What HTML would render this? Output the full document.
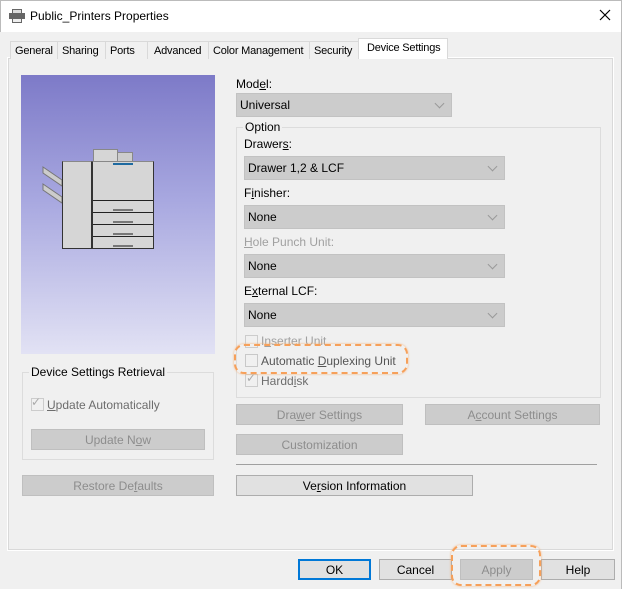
<!DOCTYPE html>
<html><head><meta charset="utf-8"><style>
*{box-sizing:border-box;margin:0;padding:0}
body{width:622px;height:589px;overflow:hidden;background:#f0f0f0;font-family:"Liberation Sans",sans-serif;font-size:12px;color:#000;position:relative}
.a{position:absolute}
.title{left:0;top:0;width:622px;height:32px;background:#fff;border:1px solid #bbb;border-bottom:none}
.tab{position:absolute;top:41px;height:18px;border:1px solid #d9d9d9;border-bottom:none;background:#f0f0f0;padding:3px 0 0 4px;white-space:nowrap;font-size:11px;letter-spacing:-0.2px;overflow:hidden}
.dd{position:absolute;background:#cccccc;border:1px solid #c2c2c2;padding:4px 0 0 3px;}
.dd:after{content:"";position:absolute;right:8px;top:6px;width:6px;height:6px;border-right:1px solid #999;border-bottom:1px solid #999;transform:rotate(45deg)}
.btn{position:absolute;background:#cccccc;border:1px solid #bfbfbf;color:#8d8d8d;text-align:center;padding-top:3px}
.en{background:#e1e1e1;border-color:#adadad;color:#000}
.lbl{position:absolute;white-space:nowrap}
.dis{color:#a0a0a0}
.cb{position:absolute;width:13px;height:13px;border:1px solid #cccccc;background:#f0f0f0}
.grp{position:absolute;border:1px solid #dcdcdc}
.grp span{position:absolute;left:6px;top:-8px;background:#f0f0f0;padding:0 2px}
.hl{position:absolute;border:2.5px dashed #f6a05a;border-radius:10px;box-shadow:0 0 2px #f8b37a}
</style></head><body>
<div class="a title"></div>
<div class="a" style="left:9px;top:9px;width:16px;height:13px">
<div class="a" style="left:3px;top:0;width:10px;height:5px;border:1px solid #666;background:#ddd"></div>
<div class="a" style="left:0;top:4px;width:16px;height:6px;background:#666"></div>
<div class="a" style="left:3px;top:9px;width:10px;height:5px;background:#eee;border:1px solid #666"></div></div>
<div class="lbl" style="left:30px;top:9px;font-size:12px">Public_Printers Properties</div>
<svg class="a" style="left:599px;top:9px" width="12" height="12"><path d="M1 1L11 11M11 1L1 11" stroke="#000" stroke-width="1.2"/></svg>

<div class="a" style="left:8px;top:58px;width:605px;height:492px;border:1px solid #d9d9d9;background:#f0f0f0;outline:1px solid #fff"></div>
<div class="tab" style="left:10px;width:48px">General</div>
<div class="tab" style="left:57px;width:49px">Sharing</div>
<div class="tab" style="left:105px;width:43px">Ports</div>
<div class="tab" style="left:147px;width:62px;padding-left:6px">Advanced</div>
<div class="tab" style="left:208px;width:102px">Color Management</div>
<div class="tab" style="left:309px;width:50px">Security</div>
<div class="tab" style="left:358px;top:38px;height:21px;width:90px;background:#fff;padding:3px 0 0 8px">Device Settings</div>

<div class="a" style="left:21px;top:75px;width:194px;height:279px;background:linear-gradient(#7d7ac8,#a8a8e0 45%,#e2e2f4 100%)"></div>
<!-- copier -->
<svg class="a" style="left:40px;top:160px" width="26" height="60"><path d="M3 7L22 20L22 26L3 13Z" fill="#ccc" stroke="#777"/><path d="M3 24L22 37L22 43L3 30Z" fill="#ccc" stroke="#777"/></svg>
<div class="a" style="left:62px;top:161px;width:30px;height:88px;background:#d6d6d6;border:1px solid #333;border-top-color:#888"></div>
<div class="a" style="left:93px;top:149px;width:25px;height:14px;background:#d6d6d6;border:1px solid #888"></div>
<div class="a" style="left:117px;top:152px;width:16px;height:10px;background:#ccc;border:1px solid #888"></div>
<div class="a" style="left:92px;top:161px;width:62px;height:88px;background:#d6d6d6;border:1px solid #333;border-top-color:#888"></div>
<div class="a" style="left:113px;top:163px;width:20px;height:2px;background:#1e6aa0"></div>
<div class="a" style="left:93px;top:200px;width:60px;height:1px;background:#222"></div>
<div class="a" style="left:93px;top:212px;width:60px;height:1px;background:#222"></div>
<div class="a" style="left:93px;top:224px;width:60px;height:1px;background:#222"></div>
<div class="a" style="left:93px;top:236px;width:60px;height:1px;background:#222"></div>
<div class="a" style="left:113px;top:209px;width:20px;height:2px;background:#777"></div>
<div class="a" style="left:113px;top:221px;width:20px;height:2px;background:#777"></div>
<div class="a" style="left:113px;top:233px;width:20px;height:2px;background:#777"></div>
<div class="a" style="left:113px;top:245px;width:20px;height:2px;background:#777"></div>

<div class="grp" style="left:22px;top:372px;width:192px;height:88px"><span>Device Settings Retrieval</span></div>
<div class="cb" style="left:31px;top:398px"></div>
<div class="lbl dis" style="left:31px;top:395px;color:#aaa">✓</div>
<div class="lbl dis" style="left:47px;top:398px;color:#6d6d6d"><u>U</u>pdate Automatically</div>
<div class="btn" style="left:31px;top:429px;width:174px;height:21px">Update N<u>o</u>w</div>
<div class="btn" style="left:22px;top:475px;width:192px;height:21px">Restore De<u>f</u>aults</div>

<div class="lbl" style="left:236px;top:77px">Mod<u>e</u>l:</div>
<div class="dd" style="left:236px;top:93px;width:216px;height:24px">Universal</div>
<div class="grp" style="left:236px;top:127px;width:365px;height:271px"><span>Option</span></div>
<div class="lbl" style="left:244px;top:137px">Drawer<u>s</u>:</div>
<div class="dd" style="left:244px;top:156px;width:261px;height:24px">Drawer 1,2 &amp; LCF</div>
<div class="lbl" style="left:244px;top:186px">F<u>i</u>nisher:</div>
<div class="dd" style="left:244px;top:205px;width:261px;height:24px">None</div>
<div class="lbl dis" style="left:244px;top:235px"><u>H</u>ole Punch Unit:</div>
<div class="dd" style="left:244px;top:254px;width:261px;height:24px">None</div>
<div class="lbl" style="left:244px;top:284px">E<u>x</u>ternal LCF:</div>
<div class="dd" style="left:244px;top:303px;width:261px;height:24px">None</div>
<div class="cb" style="left:245px;top:335px"></div>
<div class="lbl dis" style="left:261px;top:334px">I<u>n</u>serter Unit</div>
<div class="cb" style="left:245px;top:354px;border-color:#c8c8c8"></div>
<div class="lbl" style="left:261px;top:354px;color:#555">Automatic <u>D</u>uplexing Unit</div>
<div class="cb" style="left:245px;top:374px"></div>
<div class="lbl" style="left:246px;top:371px;color:#aaa">✓</div>
<div class="lbl" style="left:261px;top:374px;color:#6d6d6d">Hardd<u>i</u>sk</div>
<div class="hl" style="left:234px;top:344px;width:174px;height:30px"></div>

<div class="btn" style="left:236px;top:404px;width:167px;height:21px">Dra<u>w</u>er Settings</div>
<div class="btn" style="left:425px;top:404px;width:175px;height:21px">A<u>c</u>count Settings</div>
<div class="btn" style="left:236px;top:434px;width:167px;height:21px">Customization</div>
<div class="a" style="left:236px;top:464px;width:361px;height:1px;background:#a0a0a0"></div>
<div class="btn en" style="left:236px;top:475px;width:237px;height:21px">Ve<u>r</u>sion Information</div>

<div class="btn en" style="left:298px;top:559px;width:73px;height:21px;border:2px solid #0078d7;padding-top:2px">OK</div>
<div class="btn en" style="left:379px;top:559px;width:73px;height:21px">Cancel</div>
<div class="btn" style="left:460px;top:559px;width:73px;height:21px;color:#8d8d8d">Apply</div>
<div class="btn en" style="left:541px;top:559px;width:74px;height:21px">Help</div>
<div class="hl" style="left:451px;top:545px;width:90px;height:41px"></div>
<div class="a" style="left:621px;top:0;width:1px;height:589px;background:#bbb"></div>
</body></html>
